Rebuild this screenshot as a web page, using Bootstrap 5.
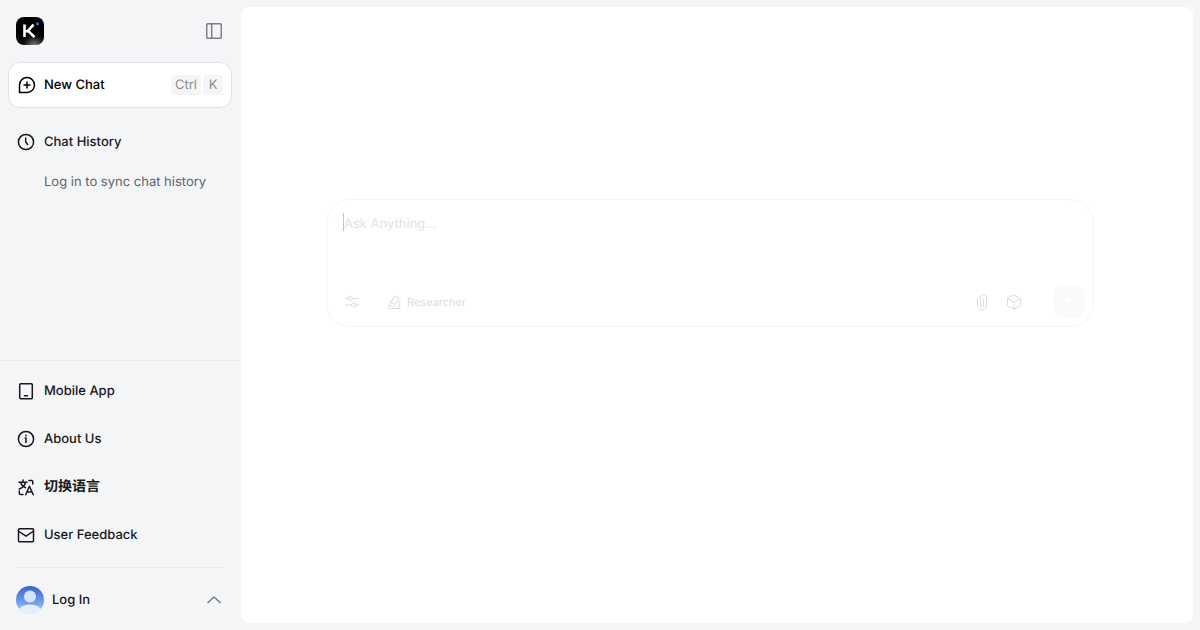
<!DOCTYPE html>
<html lang="en">
<head>
<meta charset="utf-8">
<meta name="viewport" content="width=device-width, initial-scale=1">
<title>Kimi</title>
<link href="https://cdn.jsdelivr.net/npm/bootstrap@5.3.0/dist/css/bootstrap.min.css" rel="stylesheet">
<style>
  body { font-family: Inter, "Noto Sans CJK SC", sans-serif; font-size: 13px; line-height: 20px; text-rendering: geometricPrecision; background: #f3f5f7; color: #17181a; }
  svg { flex: none; fill: none; stroke: currentColor; stroke-width: 1.5; stroke-linecap: round; stroke-linejoin: round; }
  .sidebar { width: 241px; flex: none; }
  .sidebar-head { padding: 17px 19px 17px 16px; }
  .plain-btn { border: 0; background: none; padding: 0; color: inherit; text-rendering: inherit; }
  .new-chat { height: 46px; border: 1px solid #dfe1e4; border-radius: 12px; background: #fff; padding: 0 8px 0 9px; margin: 0 9px 0 8px; font-weight: 500; text-rendering: inherit; }
  .new-chat kbd { font-family: inherit; font-size: 13px; line-height: 20px; font-weight: 400; background: #f5f5f6; color: #8b8d91; padding: 0 4px; min-width: 20px; border-radius: 4px; }
  .keys { gap: 2px; }
  .side-link { height: 48px; padding: 0 16px; color: inherit; text-decoration: none; font-weight: 500; }
  .history { margin-top: 10px; }
  .history-note { padding-left: 44px; margin-top: 6px; color: #626468; }
  .side-foot { border-top: 1px solid #eaecee; padding-top: 6px; }
  .zh { font-size: 14px; font-weight: 600; }
  .login { border-top: 1px solid #e7e9ec; margin: 8px 17px 0 16px; padding: 18px 0 16px; font-weight: 500; }
  .main-panel { background: #fff; border-radius: 8px; margin: 7px 7px 7px 0; padding: 0 30px 0 16px; }
  .composer { width: 100%; max-width: 768px; height: 128px; margin: 192px auto 0; border: 1px solid #f5f5f5; border-radius: 24px; padding: 12px 8px 8px 16px; color: #dcdcdc; }
  .composer svg { stroke-width: 1; }
  .composer textarea { border: 0; outline: 0; resize: none; padding: 0; height: 24px; line-height: 24px; font-size: 13px; background: none; color: #555; caret-color: transparent; text-rendering: inherit; }
  .composer textarea::placeholder { color: #e3e3e3; opacity: 1; }
  .caret { width: 1px; height: 18px; background: #c4c4c4; margin-top: 1px; }
  .tool-label { font-size: 11px; }
  .tools-end { gap: 14px; margin-right: 30px; }
  .send { width: 32px; height: 32px; border-radius: 10px; background: #fafafa; color: #fff; }
</style>
</head>
<body>
<div class="d-flex vh-100">
  <aside class="sidebar d-flex flex-column">
    <div class="sidebar-head d-flex align-items-center justify-content-between">
      <a href="#" aria-label="Home" class="d-flex">
        <svg width="28" height="28" viewBox="0 0 28 28">
          <defs><radialGradient id="moon" cx=".65" cy="1.05" r=".45"><stop offset="0" stop-color="#888"/><stop offset=".5" stop-color="#3a3a3a"/><stop offset="1" stop-color="#000"/></radialGradient></defs>
          <rect width="28" height="28" rx="8" fill="url(#moon)" stroke="none"/>
          <path d="M8.500 7.500v12.500M9 14.300h2.500L17.500 7.700M12.300 14.100L18.500 20" stroke="#fff" stroke-width="2.600" stroke-linecap="butt"/>
          <circle cx="21.500" cy="6.800" r="1.500" fill="#2e80e0" stroke="none"/>
        </svg>
      </a>
      <button type="button" class="plain-btn d-flex" aria-label="Toggle sidebar">
        <svg width="16" height="16" viewBox="0 0 16 16" color="#7d7f83"><rect x=".7" y=".7" width="14.600" height="14.600" rx="1.500"/><path d="M5.700 1v14"/></svg>
      </button>
    </div>
    <button type="button" class="new-chat d-flex align-items-center">
      <svg width="18" height="18" viewBox="0 0 18 18"><path d="M1.500 16.500V9A7.500 7.500 0 1 1 9 16.500zM9 6v6M6 9h6"/></svg>
      <span class="ms-2 me-auto">New Chat</span>
      <span class="keys d-flex"><kbd>Ctrl</kbd><kbd>K</kbd></span>
    </button>
    <section class="history">
      <a href="#" class="side-link d-flex align-items-center gap-2">
        <svg width="20" height="20" viewBox="0 0 20 20"><circle cx="10" cy="10" r="7.600"/><path d="M9.700 6v4l2 2.500"/></svg>Chat History
      </a>
      <div class="history-note">Log in to sync chat history</div>
    </section>
    <div class="side-foot mt-auto">
      <nav>
        <a href="#" class="side-link d-flex align-items-center gap-2">
          <svg width="20" height="20" viewBox="0 0 20 20"><rect x="3.700" y="2.700" width="12.600" height="15" rx="1"/><path d="M8.500 14.700h3"/></svg>Mobile App
        </a>
        <a href="#" class="side-link d-flex align-items-center gap-2">
          <svg width="20" height="20" viewBox="0 0 20 20"><circle cx="10" cy="10" r="7.600"/><path d="M9.200 9H10v4.500"/><circle cx="10" cy="6.500" r=".3"/></svg>About Us
        </a>
        <a href="#" class="side-link d-flex align-items-center gap-2" lang="zh">
          <svg width="20" height="20" viewBox="0 0 20 20"><path d="M3 5.200h8M7 3v2M9.500 5.500C8.800 8.500 6.500 10.800 3.300 12M4.500 5.500c.8 2.300 2.600 4.200 5 5.300M9.700 17.700l3.700-8.500 3.900 8.500M11 15h5M13 3.500h2.500a1.300 1.300 0 0 1 1.300 1.300V7M3.300 14v2.200a1.300 1.300 0 0 0 1.300 1.300H7"/></svg><span class="zh">切换语言</span>
        </a>
        <a href="#" class="side-link d-flex align-items-center gap-2">
          <svg width="20" height="20" viewBox="0 0 20 20"><rect x="2.500" y="3.700" width="15" height="13" rx="1"/><path d="M3 6.500l7 4.700 7-4.700"/></svg>User Feedback
        </a>
      </nav>
      <div class="login">
        <button type="button" class="plain-btn d-flex align-items-center gap-2 w-100">
          <svg width="28" height="28" viewBox="0 0 28 28">
            <defs><linearGradient id="sky" x2="0" y2="1"><stop stop-color="#3864cb"/><stop offset=".65" stop-color="#7ca5ef"/><stop offset="1" stop-color="#d5e7fd"/></linearGradient><clipPath id="disc"><circle cx="14" cy="14" r="14"/></clipPath></defs>
            <g clip-path="url(#disc)" stroke="none"><path d="M0 0h28v28H0z" fill="url(#sky)"/><circle cx="14" cy="10.500" r="6" fill="#d5e4fc"/><ellipse cx="14" cy="26" rx="12" ry="7.500" fill="#e4effd"/></g>
          </svg>
          <span class="fw-medium me-auto">Log In</span>
          <svg width="20" height="20" viewBox="0 0 20 20" color="#777a7e"><path d="M4 12.500l6-5.500 6 5.500"/></svg>
        </button>
      </div>
    </div>
  </aside>
  <main class="main-panel flex-grow-1">
    <form class="composer d-flex flex-column justify-content-between">
      <div class="d-flex">
        <span class="caret"></span>
        <textarea class="flex-grow-1" aria-label="Message" placeholder="Ask Anything..." rows="1"></textarea>
      </div>
      <div class="d-flex align-items-center">
        <button type="button" class="plain-btn d-flex" aria-label="Tools">
          <svg width="18" height="18" viewBox="0 0 18 18"><path d="M2.500 5.500H5M9.500 5.500h6M2.500 12h6M13 12h2.500"/><circle cx="7.200" cy="5.500" r="2.200"/><circle cx="10.800" cy="12" r="2.200"/></svg>
        </button>
        <button type="button" class="plain-btn d-flex align-items-center gap-1 ms-4">
          <svg width="18" height="18" viewBox="0 0 18 18"><path d="M3 15.500h12M10.300 3l3.700 2.500-4 6-3.700-2.500zM14 8c1.500 2.500 1 5.500-1.500 7.500M6 9l-2.500 4h5"/></svg>
          <span class="tool-label">Researcher</span>
        </button>
        <div class="tools-end d-flex ms-auto">
          <button type="button" class="plain-btn d-flex" aria-label="Attach file">
            <svg width="18" height="18" viewBox="0 0 18 18"><path d="M4.500 6v6.500a4.500 4.500 0 0 0 9 0V4.700a3 3 0 0 0-6 0v7.600a1.500 1.500 0 0 0 3 0V6"/></svg>
          </button>
          <button type="button" class="plain-btn d-flex" aria-label="Models">
            <svg width="18" height="18" viewBox="0 0 18 18"><path d="M9 2l6.500 3.500v7.200L9 16.300l-6.500-3.600V5.500zM2.500 5.500L9 9l6.500-3.500M9 9v7.300"/></svg>
          </button>
        </div>
        <button type="submit" class="plain-btn send d-flex align-items-center justify-content-center" aria-label="Send">
          <svg width="18" height="18" viewBox="0 0 18 18"><path d="M9 14.500v-10M5.500 8L9 4.500 12.500 8" stroke-width="1.500"/></svg>
        </button>
      </div>
    </form>
  </main>
</div>
<script src="https://cdn.jsdelivr.net/npm/bootstrap@5.3.0/dist/js/bootstrap.bundle.min.js"></script>
</body>
</html>
